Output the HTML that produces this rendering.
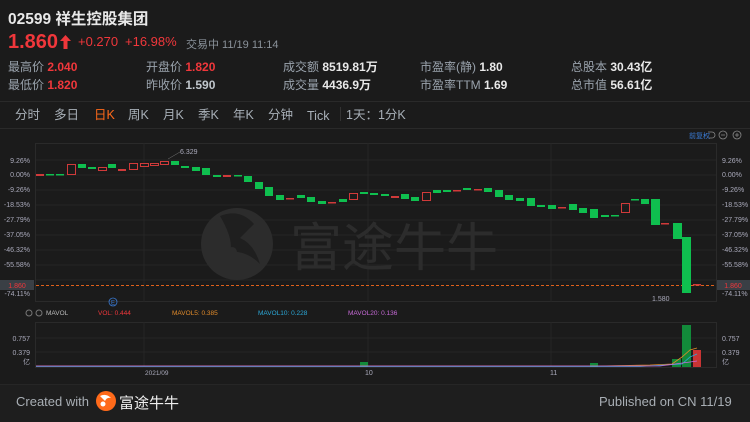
<!DOCTYPE html><html><head><meta charset="utf-8"><style>
*{margin:0;padding:0;box-sizing:border-box}
body{width:750px;height:422px;background:#1b1b1b;font-family:"Liberation Sans","Noto Sans CJK SC",sans-serif;color:#9aa3ad;position:relative;overflow:hidden}
.a{position:absolute;white-space:nowrap}
.w{color:#e8e8e8;font-weight:bold}.r{color:#f0373b}
.s{font-size:12px;line-height:14px}
.tab{font-size:12.5px;line-height:14px;color:#a8b0b8;top:108px}
</style></head><body>
<div class="a w" style="left:8px;top:7px;font-size:15.5px">02599 祥生控股集团</div>
<div class="a r" style="left:8px;top:31px;font-size:20px;font-weight:bold">1.860</div>
<svg class="a" style="left:60px;top:35px" width="11" height="14"><path d="M5.5 0L11 6H7.5V14H3.5V6H0Z" fill="#f0373b"/></svg>
<div class="a r" style="left:78px;top:34px;font-size:13px">+0.270</div>
<div class="a r" style="left:125px;top:34px;font-size:13px">+16.98%</div>
<div class="a" style="left:186px;top:36px;font-size:11px;color:#8a929a">交易中 11/19 11:14</div>
<div class="a s" style="left:8px;top:60px">最高价 <span class="w" style="color:#f0373b">2.040</span></div>
<div class="a s" style="left:8px;top:78px">最低价 <span class="w" style="color:#f0373b">1.820</span></div>
<div class="a s" style="left:146px;top:60px">开盘价 <span class="w" style="color:#f0373b">1.820</span></div>
<div class="a s" style="left:146px;top:78px">昨收价 <span class="w" style="color:#c0c6cc">1.590</span></div>
<div class="a s" style="left:283px;top:60px">成交额 <span class="w">8519.81万</span></div>
<div class="a s" style="left:283px;top:78px">成交量 <span class="w">4436.9万</span></div>
<div class="a s" style="left:420px;top:60px">市盈率(静) <span class="w">1.80</span></div>
<div class="a s" style="left:420px;top:78px">市盈率TTM <span class="w">1.69</span></div>
<div class="a s" style="left:571px;top:60px">总股本 <span class="w">30.43亿</span></div>
<div class="a s" style="left:571px;top:78px">总市值 <span class="w">56.61亿</span></div>
<div class="a" style="left:0;top:101px;width:750px;height:1px;background:#2a2a2a"></div>
<div class="a" style="left:0;top:128px;width:750px;height:1px;background:#2a2a2a"></div>
<div class="a tab" style="left:15px">分时</div><div class="a tab" style="left:54px">多日</div>
<div class="a tab" style="left:94px;color:#ff6a1a">日K</div><div class="a tab" style="left:128px">周K</div>
<div class="a tab" style="left:163px">月K</div><div class="a tab" style="left:198px">季K</div>
<div class="a tab" style="left:233px">年K</div><div class="a tab" style="left:268px">分钟</div>
<div class="a tab" style="left:307px;top:109px">Tick</div>
<div class="a" style="left:340px;top:107px;width:1px;height:14px;background:#333"></div>
<div class="a tab" style="left:346px">1天：1分K</div>
<svg class="a" style="left:0;top:129px" width="750" height="256" font-family="Liberation Sans" font-size="7">
<g transform="translate(0,-129)">
<text x="689" y="138" fill="#3a7bd5" font-size="7">前复权</text>
<circle cx="723" cy="135" r="4" fill="none" stroke="#888" stroke-width="0.8"/><circle cx="737" cy="135" r="4" fill="none" stroke="#888" stroke-width="0.8"/>
<path d="M721 135h4M735 135h4M737 133v4M708 132h4a3 3 0 0 1 0 6h-3" stroke="#888" stroke-width="0.8" fill="none"/>
<g stroke="#262626" stroke-width="1"><rect x="35.5" y="143.5" width="681" height="158" fill="none" stroke="#2a2a2a"/>
<line x1="144" y1="143" x2="144" y2="302"/><line x1="368" y1="143" x2="368" y2="302"/><line x1="551" y1="143" x2="551" y2="302"/>
<line x1="36" y1="160" x2="716" y2="160"/><line x1="36" y1="175" x2="716" y2="175"/><line x1="36" y1="190" x2="716" y2="190"/><line x1="36" y1="205" x2="716" y2="205"/><line x1="36" y1="220" x2="716" y2="220"/><line x1="36" y1="235" x2="716" y2="235"/><line x1="36" y1="250" x2="716" y2="250"/><line x1="36" y1="265" x2="716" y2="265"/><line x1="36" y1="280" x2="716" y2="280"/>
<rect x="35.5" y="322.5" width="681" height="45" fill="none" stroke="#2a2a2a"/>
<line x1="36" y1="338" x2="716" y2="338"/><line x1="36" y1="352" x2="716" y2="352"/><line x1="144" y1="322" x2="144" y2="368"/><line x1="368" y1="322" x2="368" y2="368"/><line x1="551" y1="322" x2="551" y2="368"/></g>
<g fill="#aab" text-anchor="end"><text x="30" y="163">9.26%</text><text x="30" y="177">0.00%</text><text x="30" y="192">-9.26%</text><text x="30" y="207">-18.53%</text><text x="30" y="222">-27.79%</text><text x="30" y="237">-37.05%</text><text x="30" y="252">-46.32%</text><text x="30" y="267">-55.58%</text><text x="30" y="296">-74.11%</text>
<text x="30" y="341">0.757</text><text x="30" y="355">0.379</text><text x="30" y="364">亿</text></g>
<g fill="#aab"><text x="722" y="163">9.26%</text><text x="722" y="177">0.00%</text><text x="722" y="192">-9.26%</text><text x="722" y="207">-18.53%</text><text x="722" y="222">-27.79%</text><text x="722" y="237">-37.05%</text><text x="722" y="252">-46.32%</text><text x="722" y="267">-55.58%</text><text x="722" y="296">-74.11%</text>
<text x="722" y="341">0.757</text><text x="722" y="355">0.379</text><text x="722" y="364">亿</text>
<text x="145" y="375" font-size="6.5">2021/09</text><text x="365" y="375">10</text><text x="550" y="375">11</text>
<text x="180" y="154">6.329</text><text x="652" y="301">1.580</text></g>
<!-- watermark -->
<circle cx="237" cy="244" r="36" fill="#2c2c2c"/>
<path d="M220 216q20-8 34 8q-6 6-14 14q14 6 20 26q-14-14-30-12q4-12-10-36z" fill="#1f1f1f"/>
<circle cx="232" cy="252" r="5" fill="#2c2c2c"/>
<text x="290" y="266" font-size="52" font-family="Noto Sans CJK SC" fill="#2c2c2c">富途牛牛</text>
<line x1="36" y1="285.5" x2="716" y2="285.5" stroke="#e0601a" stroke-dasharray="3,2"/>
<rect x="0" y="280" width="34" height="10" fill="#3a3f45"/><text x="17" y="288" fill="#f0373b" text-anchor="middle">1.860</text>
<rect x="717" y="280" width="33" height="10" fill="#3a3f45"/><text x="733" y="288" fill="#f0373b" text-anchor="middle">1.860</text>
<circle cx="113" cy="302" r="4" fill="none" stroke="#3a7bd5" stroke-width="0.8"/><text x="111" y="304.5" fill="#3a7bd5" font-size="6">E</text>
<g fill="#0fbf4f">
<rect x="46" y="174" width="8" height="1.5"/><rect x="56" y="174" width="8" height="1.5"/><rect x="78" y="164" width="8" height="4"/><rect x="88" y="167" width="8" height="2"/><rect x="108" y="164" width="8" height="4"/><rect x="171" y="161" width="8" height="4"/><rect x="181" y="166" width="8" height="2"/><rect x="192" y="167" width="8" height="4"/><rect x="202" y="168" width="8" height="7"/><rect x="213" y="175" width="8" height="2"/><rect x="234" y="175" width="8" height="1.5"/><rect x="244" y="176" width="8" height="6"/><rect x="255" y="182" width="8" height="7"/><rect x="265" y="187" width="8" height="9"/><rect x="276" y="195" width="8" height="5"/><rect x="297" y="195" width="8" height="3"/><rect x="307" y="197" width="8" height="5"/><rect x="318" y="201" width="8" height="3"/><rect x="339" y="199" width="8" height="3"/><rect x="360" y="192" width="8" height="2"/><rect x="370" y="193" width="8" height="2"/><rect x="381" y="194" width="8" height="2"/><rect x="401" y="194" width="8" height="5"/><rect x="411" y="197" width="8" height="4"/><rect x="433" y="190" width="8" height="3"/><rect x="443" y="190" width="8" height="2"/><rect x="463" y="188" width="8" height="2"/><rect x="484" y="188" width="8" height="4"/><rect x="495" y="190" width="8" height="7"/><rect x="505" y="195" width="8" height="5"/><rect x="516" y="198" width="8" height="3"/><rect x="527" y="198" width="8" height="8"/><rect x="537" y="205" width="8" height="2"/><rect x="548" y="205" width="8" height="4"/><rect x="569" y="204" width="8" height="6"/><rect x="579" y="208" width="8" height="5"/><rect x="590" y="209" width="8" height="9"/><rect x="601" y="215" width="8" height="2"/><rect x="611" y="215" width="8" height="1.5"/><rect x="631" y="199" width="8" height="1.5"/><rect x="641" y="199" width="8" height="5"/><rect x="651" y="199" width="9" height="26"/><rect x="673" y="223" width="9" height="16"/><rect x="682" y="237" width="9" height="56"/>
</g>
<g fill="#d03a3a"><rect x="36" y="174" width="8" height="2"/><rect x="118" y="169" width="8" height="2"/><rect x="223" y="175" width="8" height="2"/><rect x="286" y="198" width="8" height="1.5"/><rect x="328" y="202" width="8" height="1.5"/><rect x="391" y="196" width="8" height="2"/><rect x="453" y="190" width="8" height="1.5"/><rect x="474" y="189" width="8" height="1.5"/><rect x="558" y="207" width="8" height="1.5"/><rect x="661" y="223" width="8" height="1.5"/><rect x="693" y="284" width="8" height="1.5"/></g>
<g fill="none" stroke="#d03a3a"><rect x="67.5" y="164.5" width="8" height="10"/><rect x="98.5" y="167.5" width="8" height="3"/><rect x="129.5" y="163.5" width="8" height="6"/><rect x="140.5" y="163.5" width="8" height="3"/><rect x="150.5" y="163.5" width="8" height="2"/><rect x="160.5" y="161.5" width="8" height="3"/><rect x="349.5" y="193.5" width="8" height="6"/><rect x="422.5" y="192.5" width="8" height="8"/><rect x="621.5" y="203.5" width="8" height="9"/></g>
<line x1="168" y1="159" x2="180" y2="152" stroke="#777" stroke-width="0.5"/>
<g font-size="6.5"><circle cx="29" cy="313" r="3" fill="none" stroke="#777"/><circle cx="39" cy="313" r="3" fill="none" stroke="#777"/>
<text x="46" y="315" fill="#bbb">MAVOL</text><text x="98" y="315" fill="#f0373b">VOL: 0.444</text><text x="172" y="315" fill="#e08a2a">MAVOL5: 0.385</text><text x="258" y="315" fill="#2ba8d8">MAVOL10: 0.228</text><text x="348" y="315" fill="#c86ad8">MAVOL20: 0.136</text></g>
<g fill="#128a3a"><rect x="682" y="325" width="9" height="42"/><rect x="672" y="359" width="9" height="8"/><rect x="360" y="362" width="8" height="5"/><rect x="590" y="363" width="8" height="4"/></g>
<rect x="693" y="350" width="8" height="17" fill="#c83434"/>
<path d="M36 366H600L650 365L672 364L682 357L690 350L697 348" stroke="#e08a2a" fill="none" stroke-width="0.8"/>
<path d="M36 366.5H640L682 364L690 357L697 354" stroke="#2ba8d8" fill="none" stroke-width="0.8"/>
<path d="M36 366H660L690 362L697 361" stroke="#c86ad8" fill="none" stroke-width="0.8"/>
<line x1="0" y1="384.5" x2="750" y2="384.5" stroke="#262626"/>
</g></svg>
<div class="a" style="left:0;top:385px;width:750px;height:37px;background:#1e1e1e"></div>
<div class="a" style="left:16px;top:394px;font-size:13px;color:#a8aeb4">Created with</div>
<svg class="a" style="left:95px;top:390px" width="22" height="22"><circle cx="11" cy="11" r="10" fill="#ff6a1a"/><circle cx="8" cy="14" r="2.5" fill="#fff"/><path d="M5 6q6-3 11 2q-4-1-6 3" fill="#fff"/></svg>
<div class="a" style="left:119px;top:392px;font-size:15px;color:#eee;font-family:'Noto Sans CJK SC',sans-serif">富途牛牛</div>
<div class="a" style="left:599px;top:394px;font-size:13px;color:#a8aeb4">Published on CN 11/19</div>
</body></html>
